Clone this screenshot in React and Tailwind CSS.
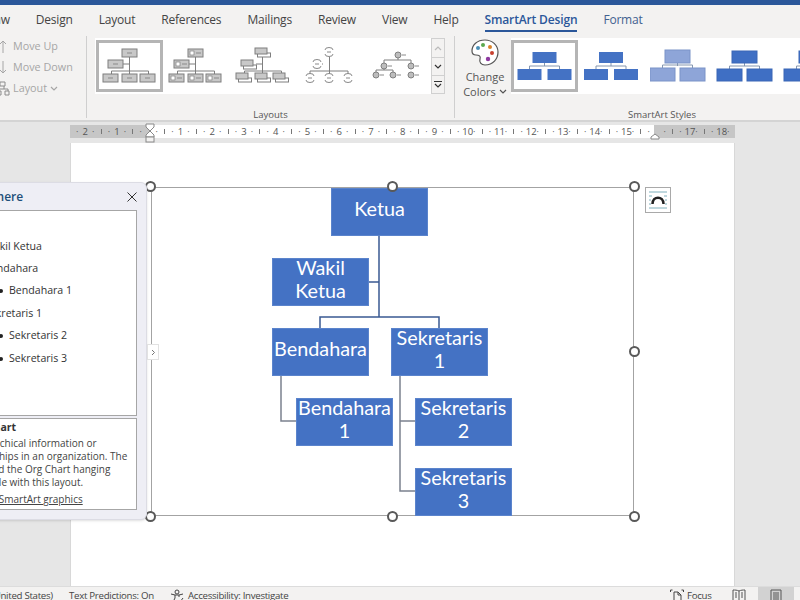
import React from 'react';

const tabs = ['Design', 'Layout', 'References', 'Mailings', 'Review', 'View', 'Help'];
const rulerValues = [3, 2, 1, null, 1, 2, 3, 4, 5, 6, 7, 8, 9, 10, 11, 12, 13, 14, 15, null, 17, 18, 19];

const Chevron = ({ up, className = '' }) => (
  <svg width="8" height="5" viewBox="0 0 8 5" className={`shrink-0 ${className}`}>
    <path d={up ? 'M1 4l3-3 3 3' : 'M1 1l3 3 3-3'} fill="none" stroke="currentColor" strokeWidth="1.2" />
  </svg>
);

const GreyBox = ({ x, y, w = 15, h = 8, mark }) => (
  <g>
    <rect x={x} y={y} width={w} height={h} fill="#c8c8c8" stroke="#7f7f7f" strokeWidth="1" />
    {mark && <rect x={x + 2} y={y + 2} width="4" height="4" fill="#fff" stroke="#7f7f7f" strokeWidth="0.7" />}
    <path d={`M${x + (mark ? 8 : 5)} ${y + 4}h5`} stroke="#8a8a8a" strokeWidth="1" />
  </g>
);

const Tree = () => (
  <path d="M32.5 17v14M26 24h6.5M14.5 34v-3h37v3M32.5 31v3" fill="none" stroke="#7f7f7f" strokeWidth="1" />
);

// Picture in the Layouts gallery, 66x52
const LayoutThumb = ({ kind }) => (
  <svg width="66" height="52" viewBox="0 0 66 52" className="shrink-0">
    {kind === 'plain' && (
      <>
        <Tree />
        <GreyBox x={25} y={9} />
        <GreyBox x={11} y={20} />
        <GreyBox x={6} y={34} />
        <GreyBox x={25} y={34} />
        <GreyBox x={43} y={34} />
      </>
    )}
    {kind === 'pic' && (
      <>
        <Tree />
        <GreyBox x={25} y={9} mark />
        <GreyBox x={11} y={20} mark />
        <GreyBox x={6} y={34} mark />
        <GreyBox x={25} y={34} mark />
        <GreyBox x={43} y={34} mark />
      </>
    )}
    {kind === 'double' && (
      <>
        <Tree />
        {[[25, 8], [11, 20], [6, 33], [25, 33], [43, 33]].map(([x, y]) => (
          <g key={`${x}-${y}`}>
            <rect x={x + 2.5} y={y + 5} width="13" height="4" fill="#fff" stroke="#7f7f7f" />
            <rect x={x} y={y} width="12" height="6" fill="#c8c8c8" stroke="#7f7f7f" />
          </g>
        ))}
      </>
    )}
    {kind === 'arc' && (
      <>
        <path d="M32.5 17v14M26 24h-1M13 31h38M13 31v3M32.5 31v3M51 31v3" fill="none" stroke="#7f7f7f" strokeWidth="1" />
        {[[32, 12], [20, 24], [13, 38], [32, 38], [51, 38]].map(([x, y]) => (
          <g key={`${x}-${y}`} fill="none" stroke="#8a8a8a" strokeWidth="1">
            <path d={`M${x - 4} ${y - 2}a4 2.5 0 0 1 8 0M${x - 4} ${y + 2}a4 2.5 0 0 0 8 0`} />
            <path d={`M${x - 2} ${y}h4`} />
          </g>
        ))}
      </>
    )}
    {kind === 'dots' && (
      <>
        <path d="M34 15v5M20 26v-6h27v6M20 26v4M12 35v-5h17v5" fill="none" stroke="#7f7f7f" strokeWidth="1" />
        {[[34, 15], [20, 26], [47, 26], [12, 35], [29, 35], [47, 35]].map(([x, y]) => (
          <g key={`${x}-${y}`}>
            <circle cx={x} cy={y} r="3" fill="#bdbdbd" stroke="#808080" />
            <path d={`M${x + 4} ${y}h4`} stroke="#8a8a8a" />
          </g>
        ))}
      </>
    )}
  </svg>
);

// Picture in the SmartArt Styles gallery, 66x52
const StyleThumb = ({ fill, stroke = 'none', top, y1, h1, y2, h2, w = 24, left, right }) => (
  <svg width="66" height="52" viewBox="0 0 66 52" className="shrink-0">
    <path d={`M${top + w / 2} ${y1 + h1}v3M${left + w / 2} ${y2}v-3h${right - left}v3`} fill="none" stroke="#8496b0" strokeWidth="1" />
    <rect x={top} y={y1} width={w} height={h1} fill={fill} stroke={stroke} />
    <rect x={left} y={y2} width={w} height={h2} fill={fill} stroke={stroke} />
    <rect x={right} y={y2} width={w} height={h2} fill={fill} stroke={stroke} />
  </svg>
);

const Palette = () => (
  <svg width="28" height="27" viewBox="0 0 28 27" className="shrink-0">
    <path d="M14 1C6 1 1 6 1 12c0 3 2 4 4 4 3 0 5 1 4 4-1 3 1 6 5 6 8 0 13-6 13-13C27 6 21 1 14 1z" fill="#fff" stroke="#555" strokeWidth="1.2" />
    <circle cx="7" cy="9" r="2" fill="#4a90b8" />
    <circle cx="12" cy="6" r="2" fill="#5aa84f" />
    <circle cx="19" cy="8" r="2" fill="#d9822b" />
    <circle cx="21" cy="14" r="2" fill="#c8402f" />
    <circle cx="17" cy="20" r="2.2" fill="#8e3aa0" />
  </svg>
);

const NODE = 'absolute flex h-[48px] w-[97px] items-center justify-center border border-[#5b84cc] bg-[#4472c4] pb-[6px] text-center font-["Lato",sans-serif] text-[19.8px] leading-[23.5px] text-white';

const HANDLE = 'absolute size-[11px] rounded-full border-2 border-[#595959] bg-white';

const RulerCell = ({ value }) => (
  <div className="flex w-[31.75px] shrink-0 items-center text-[#555]">
    <span className="w-[7.94px] text-center text-[9.5px] leading-none">{value}</span>
    <span className="w-[7.94px] text-center text-[9px] leading-none">·</span>
    <span className="flex w-[7.94px] justify-center"><span className="h-[5px] w-px bg-[#777]" /></span>
    <span className="w-[7.94px] text-center text-[9px] leading-none">·</span>
  </div>
);

const PaneRow = ({ children, sub }) => (
  <div className={`flex h-[22.4px] items-center whitespace-nowrap ${sub ? 'pl-[137px]' : 'pl-[112px]'}`}>
    {sub && <span className="absolute ml-[-10px] size-[4px] rounded-full bg-[#222]" />}
    {children}
  </div>
);

export default function App() {
  return (
    <div className="relative flex h-[600px] w-[800px] flex-col overflow-hidden bg-[#e6e6e6] font-['Open_Sans',sans-serif] text-[#444]">
      <div className="h-[5px] shrink-0 bg-[#2b579a]" />

      {/* tabs */}
      <div className="flex h-[30px] shrink-0 items-center gap-[26px] overflow-hidden bg-[#f3f2f1] pl-[37px] text-[12px] tracking-[-0.2px] text-[#444]">
        <span className="ml-[-56px]">Draw</span>
        {tabs.map((t) => <span key={t}>{t}</span>)}
        <span className="relative font-semibold tracking-[-0.15px] text-[#2b579a]">
          SmartArt Design
          <span className="absolute inset-x-0 bottom-[-3px] h-[2px] bg-[#2b579a]" />
        </span>
        <span className="text-[#41618f]">Format</span>
      </div>

      {/* ribbon */}
      <div className="flex h-[87px] shrink-0 overflow-hidden border-b-2 border-[#d4d4d4] bg-[#f3f2f1]">
        <div className="flex w-[86px] shrink-0 flex-col pt-px text-[10.8px] text-[#a6a6a6]">
          <div className="flex h-[21px] items-center pl-[13px]">
            <svg width="8" height="13" viewBox="0 0 8 13" className="absolute left-0"><path d="M3 13V1M0 4l3-3 3 3" fill="none" stroke="#a6a6a6" /></svg>
            Move Up
          </div>
          <div className="flex h-[21px] items-center pl-[13px]">
            <svg width="8" height="13" viewBox="0 0 8 13" className="absolute left-0"><path d="M3 0v12M0 9l3 3 3-3" fill="none" stroke="#a6a6a6" /></svg>
            Move Down
          </div>
          <div className="flex h-[21px] items-center gap-[3px] pl-[13px]">
            <svg width="10" height="15" viewBox="0 0 10 15" className="absolute left-0"><path d="M0 1h5v4H0zM4 5v3M-2 8h10v2M-2 8v2M-4 10h5v4h-5zM5 10h4v4H5z" fill="none" stroke="#8c8c8c" /></svg>
            Layout <Chevron />
          </div>
        </div>
        <div className="my-px h-[82px] w-px shrink-0 bg-[#cfcfcf]" />

        <div className="flex w-[367px] shrink-0 flex-col">
          <div className="ml-[8px] mt-[3px] flex h-[56px] w-[350px] shrink-0 bg-white">
            <div className="ml-px mt-[2px] flex h-[52px] w-[67px] shrink-0 items-center justify-center border-[3px] border-[#b5b5b5]">
              <LayoutThumb kind="plain" />
            </div>
            <div className="mt-[2px] flex h-[52px] w-[268px] shrink-0 items-center">
              <div className="w-[67px] shrink-0"><LayoutThumb kind="pic" /></div>
              <div className="w-[67px] shrink-0"><LayoutThumb kind="double" /></div>
              <div className="w-[67px] shrink-0"><LayoutThumb kind="arc" /></div>
              <div className="w-[67px] shrink-0"><LayoutThumb kind="dots" /></div>
            </div>
            <div className="flex w-[14px] shrink-0 flex-col border border-[#d0d0d0] bg-[#f3f2f1] text-[#333]">
              <div className="flex h-[19px] items-center justify-center border-b border-[#d0d0d0] text-[#bbb]"><Chevron up /></div>
              <div className="flex h-[18px] items-center justify-center border-b border-[#d0d0d0]"><Chevron /></div>
              <div className="flex flex-1 flex-col items-center justify-center gap-px">
                <span className="h-px w-[8px] bg-[#333]" />
                <Chevron />
              </div>
            </div>
          </div>
          <div className="mt-[14px] text-center text-[9.5px] text-[#555]">Layouts</div>
        </div>
        <div className="my-px h-[82px] w-px shrink-0 bg-[#cfcfcf]" />

        <div className="flex w-[414px] shrink-0 flex-col">
          <div className="mt-[3px] flex h-[56px] shrink-0">
            <div className="flex w-[56px] shrink-0 flex-col items-center pl-[4px] pt-px text-[11px] leading-[15px] text-[#555]">
              <Palette />
              <span className="mt-[3px]">Change</span>
              <span className="flex items-center gap-[3px]">Colors <Chevron /></span>
            </div>
            <div className="flex h-[56px] flex-1 bg-white">
              <div className="mt-[2px] flex h-[52px] w-[67px] shrink-0 items-center justify-center border-[3px] border-[#b5b5b5]">
                <StyleThumb fill="#4472c4" top={20.5} y1={12} h1={11} y2={29} h2={11} left={5.5} right={35.5} />
              </div>
              <div className="mt-[2px] flex h-[52px] pl-[6px]">
                <StyleThumb fill="#4472c4" top={15} y1={12} h1={11} y2={29} h2={11} left={0} right={30} />
                <StyleThumb fill="#8ea5d8" stroke="#7b93c8" top={15} y1={10} h1={13} y2={28} h2={13} w={25} left={0} right={30} />
                <StyleThumb fill="#3f6fc4" stroke="#3a67b6" top={16} y1={11} h1={12} y2={29} h2={12} w={25} left={1} right={31} />
                <StyleThumb fill="#3f6fc4" stroke="#3a67b6" top={17} y1={11} h1={12} y2={29} h2={12} w={25} left={2} right={32} />
              </div>
            </div>
          </div>
          <div className="mt-[14px] text-center text-[9.5px] text-[#555]">SmartArt Styles</div>
        </div>
      </div>

      {/* ruler */}
      <div className="relative flex h-[21px] shrink-0 pl-[70px] pt-[3px]">
        <div className="relative flex h-[13px] w-[665px] overflow-hidden">
          <div className="w-[80px] bg-[#c6c6c6]" />
          <div className="w-[504px] bg-white" />
          <div className="flex-1 bg-[#c6c6c6]" />
          <div className="absolute inset-y-0 left-[-20.5px] flex">
            {rulerValues.map((v, i) => <RulerCell key={i} value={v} />)}
          </div>
        </div>
        <svg width="12" height="20" viewBox="0 0 12 20" className="absolute left-[144px] top-[1px]">
          <path d="M2 1h8v3L6 8 2 4zM6 8l4 4v2H2v-2z" fill="#fff" stroke="#888" />
          <rect x="2" y="14" width="8" height="5" fill="#f3f2f1" stroke="#888" />
        </svg>
        <svg width="10" height="7" viewBox="0 0 10 7" className="absolute left-[650px] top-[11px]">
          <path d="M1 6V4l4-3 4 3v2z" fill="#fff" stroke="#888" />
        </svg>
      </div>

      {/* document */}
      <div className="relative flex min-h-0 flex-1">
        <div className="w-[70px] shrink-0" />
        <div className="relative w-[665px] shrink-0 border-x border-[#d8d8d8] bg-white">
          <div className="absolute left-[80px] top-[44px] h-[329px] w-[483px] border-[1.5px] border-[#a3a3a3]">
            <svg width="483" height="329" className="absolute left-[-1px] top-[-1px]" fill="none" strokeWidth="1.5">
              <path d="M228 49v81M218 95h10M169 141v-11h119v11" stroke="#3a5a92" />
              <path d="M130 188v46h15M249 188v116h15M249 234h15" stroke="#7b818e" />
            </svg>
            <div className={`${NODE} left-[179px] top-0`}>Ketua</div>
            <div className={`${NODE} left-[120px] top-[70px]`}>Wakil<br />Ketua</div>
            <div className={`${NODE} left-[120px] top-[140px]`}>Bendahara</div>
            <div className={`${NODE} left-[239px] top-[140px]`}>Sekretaris<br />1</div>
            <div className={`${NODE} left-[144px] top-[210px]`}>Bendahara<br />1</div>
            <div className={`${NODE} left-[263px] top-[210px]`}>Sekretaris<br />2</div>
            <div className={`${NODE} left-[263px] top-[280px]`}>Sekretaris<br />3</div>

            <span className={`${HANDLE} left-[-7px] top-[-7px]`} />
            <span className={`${HANDLE} left-[235px] top-[-7px]`} />
            <span className={`${HANDLE} right-[-7px] top-[-7px]`} />
            <span className={`${HANDLE} right-[-7px] top-[158px]`} />
            <span className={`${HANDLE} bottom-[-7px] left-[-7px]`} />
            <span className={`${HANDLE} bottom-[-7px] left-[235px]`} />
            <span className={`${HANDLE} bottom-[-7px] right-[-7px]`} />

            <div className="absolute left-[493px] top-[-1px] flex size-[26px] items-center justify-center border border-[#a9a9a9] bg-white">
              <svg width="22" height="22" viewBox="0 0 22 22" fill="none">
                <path d="M2 3h18M2 19h18M2 7h3M17 7h3M2 11h2M18 11h2M2 15h2M18 15h2" stroke="#7fb0bd" strokeWidth="1" />
                <path d="M5.5 15c0-8.5 11-8.5 11 0" stroke="#222" strokeWidth="2.5" />
              </svg>
            </div>
          </div>

          {/* text pane */}
          <div className="absolute left-[-211px] top-[39px] flex h-[338px] w-[287px] flex-col rounded-md border border-[#dcdce4] bg-[#eeeef5] pr-[9px] shadow-sm">
            <div className="flex h-[27px] shrink-0 items-center justify-between pl-[49px]">
              <span className="whitespace-nowrap text-[12px] font-semibold text-[#1f4e79]">Type your text here</span>
              <svg width="10" height="10" viewBox="0 0 10 10" className="mt-px"><path d="M.5.5l9 9M9.5.5l-9 9" stroke="#333" strokeWidth="1" /></svg>
            </div>
            <div className="ml-[10px] flex h-[206px] shrink-0 flex-col border border-[#a6a6a6] bg-white pt-[24.4px] text-[10.6px] text-[#333]">
              <PaneRow>Wakil Ketua</PaneRow>
              <PaneRow>Bendahara</PaneRow>
              <PaneRow sub>Bendahara 1</PaneRow>
              <PaneRow>Sekretaris 1</PaneRow>
              <PaneRow sub>Sekretaris 2</PaneRow>
              <PaneRow sub>Sekretaris 3</PaneRow>
            </div>
            <div className="ml-[10px] mt-[2px] h-[92px] shrink-0 whitespace-nowrap border border-[#a6a6a6] bg-white pl-[40px] pt-[2px] text-[10px] leading-[13.1px] text-[#444]">
              <div className="mb-[3px] ml-[4px] text-[10.5px] font-bold text-[#333]">Organization Chart</div>
              <div>Use to show hierarchical information or</div>
              <div>reporting relationships in an organization. The</div>
              <div>assistant shape and the Org Chart hanging</div>
              <div>layouts are available with this layout.</div>
              <div className="mt-[4px] underline">Learn more about SmartArt graphics</div>
            </div>
          </div>
          <div className="absolute left-[76px] top-[201px] flex h-[16px] w-[12px] items-center justify-center border border-[#e2e2e2] bg-white">
            <svg width="5" height="7" viewBox="0 0 5 7"><path d="M1 1l2.5 2.5L1 6" fill="none" stroke="#777" /></svg>
          </div>
        </div>
      </div>

      {/* status bar */}
      <div className="flex h-[14px] shrink-0 items-start border-t border-[#dcdcdc] bg-[#f3f2f1] text-[9.7px] leading-[18px] tracking-[-0.3px] text-[#444]">
        <span className="ml-[-41px] w-[110px] shrink-0 whitespace-nowrap">English (United States)</span>
        <span className="w-[101px] shrink-0 whitespace-nowrap">Text Predictions: On</span>
        <svg width="14" height="14" viewBox="0 0 14 14" className="mt-[2px] shrink-0" fill="none" stroke="#444">
          <circle cx="7" cy="3" r="2" />
          <path d="M1 5l4 1h4l4-1M5 6v3l-2 4M9 6v2M8 11l2 2 3-4" />
        </svg>
        <span className="ml-[4px] w-[482px] shrink-0 whitespace-nowrap">Accessibility: Investigate</span>
        <svg width="14" height="14" viewBox="0 0 14 14" className="mt-[2px] shrink-0" fill="none" stroke="#444">
          <path d="M0.5 3V1h2M11.5 1h2v2M4 3h4l3 3v8H4zM8 3v3h3" />
        </svg>
        <span className="ml-[3px] w-[45px] shrink-0 whitespace-nowrap">Focus</span>
        <svg width="14" height="14" viewBox="0 0 14 14" className="mt-[2px] shrink-0" fill="none" stroke="#555">
          <path d="M7 2C5 1 3 1 1 1v11c2 0 4 0 6 1 2-1 4-1 6-1V1c-2 0-4 0-6 1zM7 2v11M3 4h2M3 6h2M3 8h2M9 4h2M9 6h2M9 8h2" />
        </svg>
        <div className="ml-[12px] flex h-[14px] w-[36px] shrink-0 justify-center bg-[#d2d2d2] pt-[2px]">
          <svg width="12" height="14" viewBox="0 0 12 14" fill="none" stroke="#555" className="shrink-0">
            <path d="M1 1h10v13H1zM3 4h6M3 6h6M3 8h6M3 10h6" />
          </svg>
        </div>
      </div>
    </div>
  );
}
